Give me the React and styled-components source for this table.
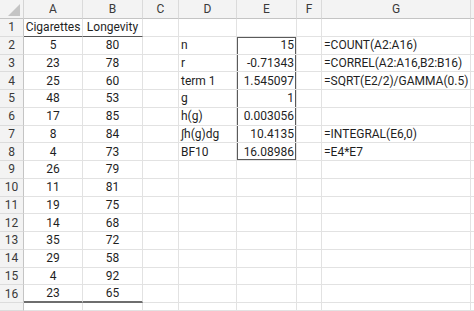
import React from "react";
import styled, { createGlobalStyle } from "styled-components";

const GlobalStyle = createGlobalStyle`
  html, body {
    margin: 0;
    padding: 0;
    background: #ffffff;
    overflow: hidden;
  }
`;

const columns = ["A", "B", "C", "D", "E", "F", "G", ""];

const rows = [
  ["Cigarettes", "Longevity", "", "", "", "", ""],
  ["5", "80", "", "n", "15", "", "=COUNT(A2:A16)"],
  ["23", "78", "", "r", "-0.71343", "", "=CORREL(A2:A16,B2:B16)"],
  ["25", "60", "", "term 1", "1.545097", "", "=SQRT(E2/2)/GAMMA(0.5)"],
  ["48", "53", "", "g", "1", "", ""],
  ["17", "85", "", "h(g)", "0.003056", "", ""],
  ["8", "84", "", "∫h(g)dg", "10.4135", "", "=INTEGRAL(E6,0)"],
  ["4", "73", "", "BF10", "16.08986", "", "=E4*E7"],
  ["26", "79", "", "", "", "", ""],
  ["11", "81", "", "", "", "", ""],
  ["19", "75", "", "", "", "", ""],
  ["14", "68", "", "", "", "", ""],
  ["35", "72", "", "", "", "", ""],
  ["29", "58", "", "", "", "", ""],
  ["4", "92", "", "", "", "", ""],
  ["23", "65", "", "", "", "", ""],
];

// alignment per column A..G
const align = ["center", "center", "left", "left", "right", "left", "left"];

const Sheet = styled.div`
  display: grid;
  grid-template-columns: 24px 59px 60px 36px 58px 60px 25px 149px 1fr;
  grid-template-rows: 19px repeat(16, 17.75px) 1fr;
  width: 474px;
  height: 311px;
  overflow: hidden;
  font-family: Roboto, "Liberation Sans", Arial, sans-serif;
  font-size: 12px;
  color: #1f1f1f;
`;

const Corner = styled.div`
  background: #f3f3f3;
  border-right: 1px solid #d4d4d4;
  border-bottom: 1px solid #c4c4c4;
  display: flex;
  align-items: flex-end;
  justify-content: flex-end;
  padding: 0 3px 2px 0;
  box-sizing: border-box;

  &::after {
    content: "";
    width: 0;
    height: 0;
    border-left: 12px solid transparent;
    border-bottom: 12px solid #c4c4c4;
  }
`;

const ColHead = styled.div`
  background: #f3f3f3;
  border-right: 1px solid #dadada;
  border-bottom: 1px solid #c4c4c4;
  box-sizing: border-box;
  display: flex;
  align-items: center;
  justify-content: center;
  color: #3a3a3a;
`;

const RowHead = styled.div`
  background: #f3f3f3;
  border-right: 1px solid #c4c4c4;
  border-bottom: 1px solid #dcdcdc;
  box-sizing: border-box;
  display: flex;
  align-items: center;
  justify-content: center;
  color: #3a3a3a;
`;

const Cell = styled.div`
  border-right: 1px solid #e2e2e2;
  border-bottom: ${({ $under }) =>
    $under === "thick"
      ? "2px solid #6e6e6e"
      : $under === "thin"
      ? "1px solid #555"
      : "1px solid #e2e2e2"};
  box-sizing: border-box;
  display: flex;
  align-items: center;
  justify-content: ${({ $align }) =>
    $align === "center" ? "center" : $align === "right" ? "flex-end" : "flex-start"};
  padding: 0 2px;
  white-space: nowrap;
  box-shadow: ${({ $box }) =>
    $box === "top"
      ? "inset 1px 0 0 #5a5a5a, inset -1px 0 0 #5a5a5a, inset 0 1px 0 #5a5a5a"
      : $box === "bottom"
      ? "inset 1px 0 0 #5a5a5a, inset -1px 0 0 #5a5a5a, inset 0 -1px 0 #5a5a5a"
      : $box === "mid"
      ? "inset 1px 0 0 #5a5a5a, inset -1px 0 0 #5a5a5a"
      : "none"};
`;

const boxFor = (r, c) => {
  if (c !== 4 || r < 1 || r > 7) return undefined;
  if (r === 1) return "top";
  if (r === 7) return "bottom";
  return "mid";
};

const underFor = (r, c) => {
  if (c > 1) return undefined;
  if (r === 0) return "thin";
  if (r === 15) return "thick";
  return undefined;
};

export default function App() {
  return (
    <>
      <GlobalStyle />
      <Sheet>
        <Corner />
        {columns.map((c, i) => (
          <ColHead key={i}>{c}</ColHead>
        ))}
        {rows.map((row, r) => (
          <React.Fragment key={r}>
            <RowHead>{r + 1}</RowHead>
            {row.map((v, c) => (
              <Cell
                key={c}
                $align={align[c]}
                $box={boxFor(r, c)}
                $under={underFor(r, c)}
              >
                {v}
              </Cell>
            ))}
            <Cell />
          </React.Fragment>
        ))}
        {/* partly visible row below the data */}
        <RowHead />
        {columns.map((_, i) => (
          <Cell key={i} />
        ))}
      </Sheet>
    </>
  );
}
